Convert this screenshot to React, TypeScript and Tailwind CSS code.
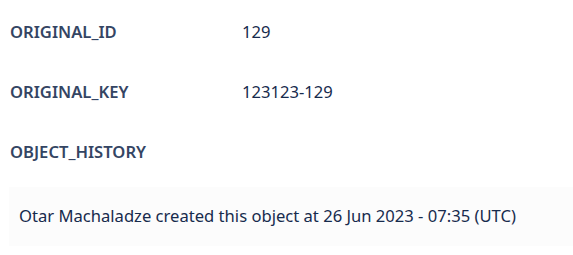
export default function App() {
  const rows = [
    { label: "ORIGINAL_ID", value: "129" },
    { label: "ORIGINAL_KEY", value: "123123-129" },
  ];

  return (
    <div className="h-[255px] w-[573px] bg-white font-['Noto_Sans',sans-serif] text-[16.6px] text-[#172b4d]">
      <div className="pl-[10px] pt-[20px]">
        {rows.map((row) => (
          <div key={row.label} className="flex h-[60px] items-start">
            <div className="w-[232px] font-semibold text-[#344563]">{row.label}</div>
            <div>{row.value}</div>
          </div>
        ))}
        <div className="h-[47px] font-semibold text-[#344563]">OBJECT_HISTORY</div>
      </div>
      <div className="ml-[9px] flex h-[59px] items-center bg-[#fcfcfc] pl-[10px]">
        Otar Machaladze created this object at 26 Jun 2023 - 07:35 (UTC)
      </div>
    </div>
  );
}
